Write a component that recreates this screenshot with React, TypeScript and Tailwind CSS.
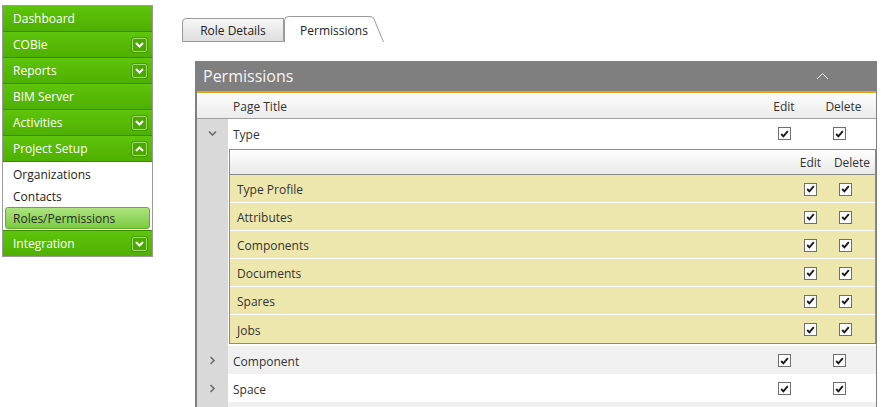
import React from 'react';

const Chevron: React.FC<{ up?: boolean }> = ({ up }) => (
  <span className="flex w-[15px] h-[14px] items-center justify-center rounded-[2px] border border-[#9fdc6f] bg-[#4aa800] shadow-[0_0_0_1px_rgba(40,110,0,0.35)]">
    <svg width="9" height="6" viewBox="0 0 9 6">
      <path d={up ? 'M1 5 L4.5 1.5 L8 5' : 'M1 1 L4.5 4.5 L8 1'} fill="none" stroke="#fff" strokeWidth="2" />
    </svg>
  </span>
);

const Check: React.FC = () => (
  <span className="inline-flex w-[13px] h-[13px] items-center justify-center border border-[#6f6f6f] bg-white">
    <svg width="9" height="8" viewBox="0 0 9 8">
      <path d="M1.2 4 L3.4 6.3 L7.8 1.2" fill="none" stroke="#1a1a1a" strokeWidth="1.9" />
    </svg>
  </span>
);

const GreenItem: React.FC<{ label: string; toggle?: 'up' | 'down' }> = ({ label, toggle }) => (
  <div className="flex h-[26px] items-center justify-between border-b border-[#3c8a00] bg-gradient-to-b from-[#5ec40c] to-[#4fb000] pl-[10px] pr-[5px] text-[12px] text-white">
    <span>{label}</span>
    {toggle && <Chevron up={toggle === 'up'} />}
  </div>
);

const Sidebar: React.FC = () => (
  <div className="ml-[2px] mt-[5px] w-[151px] self-start border border-[#9a9a9a] bg-white">
    <GreenItem label="Dashboard" />
    <GreenItem label="COBie" toggle="down" />
    <GreenItem label="Reports" toggle="down" />
    <GreenItem label="BIM Server" />
    <GreenItem label="Activities" toggle="down" />
    <GreenItem label="Project Setup" toggle="up" />
    <div className="flex flex-col pb-[1px] text-[12px] text-[#222]">
      <div className="flex h-[23px] items-center pl-[10px] pt-[2px]">Organizations</div>
      <div className="flex h-[22px] items-center pl-[10px] pt-[1px]">Contacts</div>
      <div className="mx-[2px] flex h-[22px] items-center rounded-[3px] border border-[#62ad2c] bg-gradient-to-b from-[#ace37e] to-[#7ccb3e] pl-[7px] pt-[1px] text-[#2a2a2a]">
        Roles/Permissions
      </div>
    </div>
    <div className="border-t border-[#3c8a00]">
      <div className="flex h-[25px] items-center justify-between bg-gradient-to-b from-[#5ec40c] to-[#4fb000] pl-[10px] pr-[5px] text-[12px] text-white">
        <span>Integration</span>
        <Chevron />
      </div>
    </div>
  </div>
);

const Gutter: React.FC<{ icon?: 'down' | 'right' }> = ({ icon }) => (
  <div className="flex w-[31px] shrink-0 items-center justify-center self-stretch bg-[#d9d9d9] pt-[1px]">
    {icon && (
      <svg width="9" height="9" viewBox="0 0 9 9">
        <path
          d={icon === 'down' ? 'M1 2.5 L4.5 6 L8 2.5' : 'M2.5 1 L6 4.5 L2.5 8'}
          fill="none"
          stroke="#707070"
          strokeWidth="1.7"
        />
      </svg>
    )}
  </div>
);

const OuterRow: React.FC<{ label: string; bg: string; icon: 'down' | 'right' }> = ({ label, bg, icon }) => (
  <div className={`flex h-[28px] items-center ${bg}`}>
    <Gutter icon={icon} />
    <div className="flex-1 pl-[5px] pt-[3px]">{label}</div>
    <div className="flex w-[57px] justify-center pl-[1px] pt-[1px]">
      <Check />
    </div>
    <div className="flex w-[64px] justify-center pr-[10px] pt-[1px]">
      <Check />
    </div>
  </div>
);

const subItems = ['Type Profile', 'Attributes', 'Components', 'Documents', 'Spares', 'Jobs'];

export default function App() {
  return (
    <div className="flex h-[407px] w-[883px] overflow-hidden bg-white font-['Open_Sans',sans-serif] text-[12px] text-[#333]">
      <Sidebar />

      <div className="ml-[29px] mt-[16px] flex flex-col">
        {/* Tabs */}
        <div className="flex h-[26px] items-end">
          <div className="flex h-[24px] w-[102px] items-center justify-center rounded-tl-[4px] border border-[#9a9a9a] bg-gradient-to-b from-[#f6f6f6] to-[#dedede] pt-[1px] text-[#222]">
            Role Details
          </div>
          <div className="relative flex h-[26px] w-[100px] items-center justify-center pt-[3px] text-[#222]">
            <svg className="absolute inset-0" width="100" height="26" viewBox="0 0 100 26">
              <path d="M0.5 26 V4.5 Q0.5 0.5 4.5 0.5 H86 Q89 0.5 90 3 L99.5 26" fill="#fff" stroke="#9a9a9a" />
            </svg>
            <span className="relative">Permissions</span>
          </div>
        </div>

        {/* Panel */}
        <div className="ml-[13px] mt-[19px] w-[682px] border-l-2 border-r border-[#7f7f7f]">
          <div className="flex h-[30px] items-center justify-between bg-[#7f7f7f] pl-[6px] pr-[47px] text-[16px] text-[#f4f4f4]">
            <span>Permissions</span>
            <svg width="13" height="8" viewBox="0 0 13 8">
              <path d="M1 7 L6.5 1.5 L12 7" fill="none" stroke="#fff" strokeWidth="1" />
            </svg>
          </div>
          <div className="h-[2px] bg-[#eaa21a]" />

          <div className="flex h-[26px] items-center border-b border-[#a0a0a0] bg-gradient-to-b from-[#fdfdfd] to-[#ebebeb] pt-[3px]">
            <div className="w-[31px]" />
            <div className="flex-1 pl-[5px]">Page Title</div>
            <div className="w-[57px] text-center pl-[1px]">Edit</div>
            <div className="w-[64px] text-center pr-[1px]">Delete</div>
          </div>

          <OuterRow label="Type" bg="bg-white" icon="down" />

          {/* Expanded detail */}
          <div className="flex">
            <Gutter />
            <div className="flex-1 bg-white pl-[1px] pt-[2px] pb-[2px]">
              <div className="border border-[#8a8a8a] bg-[#ede7ae]">
                <div className="flex h-[25px] items-center border-b border-[#8a8a8a] bg-gradient-to-b from-[#ffffff] to-[#e9e9e9] pt-[2px]">
                  <div className="flex-1" />
                  <div className="w-[40px] text-center pl-[3px]">Edit</div>
                  <div className="w-[46px] text-center">Delete</div>
                </div>
                {subItems.map((s, i) => (
                  <div
                    key={s}
                    className={`flex h-[28px] items-center ${i < subItems.length - 1 ? 'border-b border-white' : ''}`}
                  >
                    <div className="flex-1 pl-[7px] pt-[3px]">{s}</div>
                    <div className="flex w-[40px] justify-center pl-[2px] pt-[1px]">
                      <Check />
                    </div>
                    <div className="flex w-[46px] justify-center pr-[13px] pt-[1px]">
                      <Check />
                    </div>
                  </div>
                ))}
              </div>
            </div>
          </div>

          <OuterRow label="Component" bg="bg-[#f0f0f0]" icon="right" />
          <OuterRow label="Space" bg="bg-white" icon="right" />
          <div className="flex h-[28px] bg-[#f0f0f0]">
            <Gutter />
          </div>
        </div>
      </div>
    </div>
  );
}
